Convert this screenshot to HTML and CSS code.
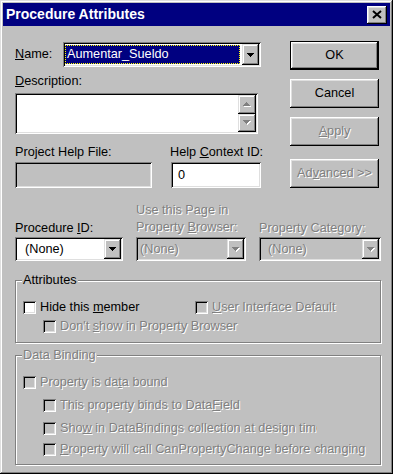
FILE: index.html
```html
<!DOCTYPE html>
<html>
<head lang="en">
    <meta charset="UTF-8">
    <title>Procedure Attributes</title>
    <link rel="stylesheet" href="styles.css">
</head>
<body>
<div class="window">
    <div class="titlebar">
        <span class="title">Procedure Attributes</span>
        <span class="close">
            <svg width="10" height="9" viewBox="0 0 10 9"><path d="M1 1l8 7M9 1L1 8" stroke="#000" stroke-width="2"/></svg>
        </span>
    </div>

    <div class="client">
        <div class="top">
            <div class="main">
                <div class="name-row">
                    <span class="lbl"><u>N</u>ame:</span>
                    <div class="combo combo-name">
                        <span class="combo-value selected">Aumentar_Sueldo</span>
                        <span class="drop">
                            <svg width="7" height="4" viewBox="0 0 7 4" shape-rendering="crispEdges"><path d="M0 0H7V1H6V2H5V3H4V4H3V3H2V2H1V1H0Z"/></svg>
                        </span>
                    </div>
                </div>

                <div class="lbl desc-lbl"><u>D</u>escription:</div>
                <div class="memo">
                    <div class="vscroll">
                        <span class="sbtn">
                            <svg width="8" height="5" viewBox="0 0 8 5" shape-rendering="crispEdges"><path fill="#fff" transform="translate(1 1)" d="M3 0H4V1H5V2H6V3H7V4H0V3H1V2H2V1H3Z"/><path fill="#808080" d="M3 0H4V1H5V2H6V3H7V4H0V3H1V2H2V1H3Z"/></svg>
                        </span>
                        <span class="sbtn">
                            <svg width="8" height="5" viewBox="0 0 8 5" shape-rendering="crispEdges"><path fill="#fff" transform="translate(1 1)" d="M0 0H7V1H6V2H5V3H4V4H3V3H2V2H1V1H0Z"/><path fill="#808080" d="M0 0H7V1H6V2H5V3H4V4H3V3H2V2H1V1H0Z"/></svg>
                        </span>
                    </div>
                </div>

                <div class="help-row">
                    <div class="field help-file">
                        <span class="lbl">Project Help File:</span>
                        <div class="edit edit-off"></div>
                    </div>
                    <div class="field help-ctx">
                        <span class="lbl">Help <u>C</u>ontext ID:</span>
                        <div class="edit">0</div>
                    </div>
                </div>
            </div>

            <div class="buttons">
                <span class="btn btn-default"><span>OK</span></span>
                <span class="btn"><span>Cancel</span></span>
                <span class="btn off"><span><u>A</u>pply</span></span>
                <span class="btn btn-adv off"><span>Ad<u>v</u>anced &gt;&gt;</span></span>
            </div>
        </div>

        <div class="proc-row">
            <div class="proc-col">
                <span class="lbl">Procedure <u>I</u>D:</span>
                <div class="combo combo-proc">
                    <span class="combo-value pad-1">(None)</span>
                    <span class="drop">
                        <svg width="7" height="4" viewBox="0 0 7 4" shape-rendering="crispEdges"><path d="M0 0H7V1H6V2H5V3H4V4H3V3H2V2H1V1H0Z"/></svg>
                    </span>
                </div>
            </div>
            <div class="proc-col">
                <span class="lbl lbl-2line off">Use this Page in<br>Property <u>B</u>rowser:</span>
                <div class="combo combo-proc combo-off">
                    <span class="combo-value pad-2 off">(None)</span>
                    <span class="drop">
                        <svg width="8" height="5" viewBox="0 0 8 5" shape-rendering="crispEdges"><path fill="#fff" transform="translate(1 1)" d="M0 0H7V1H6V2H5V3H4V4H3V3H2V2H1V1H0Z"/><path fill="#808080" d="M0 0H7V1H6V2H5V3H4V4H3V3H2V2H1V1H0Z"/></svg>
                    </span>
                </div>
            </div>
            <div class="proc-col">
                <span class="lbl off">Property Cate<u>g</u>ory:</span>
                <div class="combo combo-proc combo-off">
                    <span class="combo-value pad-3 off">(None)</span>
                    <span class="drop">
                        <svg width="8" height="5" viewBox="0 0 8 5" shape-rendering="crispEdges"><path fill="#fff" transform="translate(1 1)" d="M0 0H7V1H6V2H5V3H4V4H3V3H2V2H1V1H0Z"/><path fill="#808080" d="M0 0H7V1H6V2H5V3H4V4H3V3H2V2H1V1H0Z"/></svg>
                    </span>
                </div>
            </div>
        </div>

        <div class="group group-attr">
            <span class="group-title">Attributes</span>
            <div class="checks checks-attr">
                <div class="check-pair">
                    <label class="check"><i class="box"></i><span>Hide this <u>m</u>ember</span></label>
                    <label class="check off"><i class="box box-off"></i><span><u>U</u>ser Interface Default</span></label>
                </div>
                <label class="check sub off"><i class="box box-off"></i><span>Don't <u>s</u>how in Property Browser</span></label>
            </div>
        </div>

        <div class="group group-data">
            <span class="group-title off">Data Binding</span>
            <div class="checks">
                <label class="check off"><i class="box box-off"></i><span>Property is da<u>t</u>a bound</span></label>
                <label class="check sub off"><i class="box box-off"></i><span>This property binds to Data<u>F</u>ield</span></label>
                <label class="check sub off"><i class="box box-off"></i><span class="clip">Sho<u>w</u> in DataBindings collection at design time</span></label>
                <label class="check sub tight off"><i class="box box-off"></i><span><u>P</u>roperty will call CanPropertyChange before changing</span></label>
            </div>
        </div>
    </div>
</div>
</body>
</html>
```

FILE: styles.css
```css
*{
    margin: 0;
    padding: 0;
    box-sizing: border-box;
}
html,body{
    font-family: "Liberation Sans", Arial, sans-serif;
    font-size: 12.7px;
    line-height: 15px;
    color: #000;
    background: #c0c0c0;
}
u{
    text-underline-offset: 1px;
}
.window{
    width: 393px;
    height: 474px;
    padding: 3px;
    background: #c0c0c0;
    box-shadow: inset -1px -1px #000, inset 1px 1px #dfdfdf, inset -2px -2px #808080, inset 2px 2px #fff;
}
.titlebar{
    height: 23px;
    display: flex;
    align-items: center;
    justify-content: space-between;
    padding: 0 3px 0 3px;
    background: #000080;
    color: #fff;
}
.title{
    font-size: 14px;
    font-weight: bold;
}
.close{
    width: 20px;
    height: 18px;
    display: flex;
    align-items: center;
    justify-content: center;
    background: #c0c0c0;
    box-shadow: inset -1px -1px #000, inset 1px 1px #fff, inset -2px -2px #808080, inset 2px 2px #dfdfdf;
}

/* disabled text: grey with a white emboss */
.off{
    color: #808080;
    text-shadow: 1px 1px 0 #fff;
}
.lbl{
    white-space: nowrap;
}

.client{
    padding: 15px 0 0 12px;
}
.top{
    display: flex;
    gap: 29px;
}
.main{
    width: 246px;
}
.name-row{
    display: flex;
    align-items: center;
    justify-content: space-between;
    margin-top: 1px;
}
.desc-lbl{
    margin-top: 7px;
}

/* sunken fields */
.combo, .memo, .edit, .box{
    background: #fff;
    box-shadow: inset 1px 1px #808080, inset -1px -1px #fff, inset 2px 2px #000, inset -2px -2px #dfdfdf;
}
.combo{
    display: flex;
    height: 24px;
    padding: 2px;
}
.combo-name{
    width: 198px;
    height: 25px;
}
.combo-off, .edit-off, .box-off{
    background: #c0c0c0;
}
.combo-value{
    flex: 1;
    display: flex;
    align-items: center;
    white-space: nowrap;
}
.combo-value.selected{
    margin: 1px 2px 1px 0;
    padding-left: 2px;
    background: #000080;
    color: #fff;
    outline: 1px dotted #ffff00;
    outline-offset: -1px;
}
.pad-1{ padding-left: 8px; }
.pad-2{ padding-left: 2px; }
.pad-3{ padding-left: 7px; }
.drop, .sbtn{
    width: 17px;
    display: flex;
    align-items: center;
    justify-content: center;
    background: #c0c0c0;
    box-shadow: inset -1px -1px #000, inset 1px 1px #dfdfdf, inset -2px -2px #808080, inset 2px 2px #fff;
}

.memo{
    height: 41px;
    width: 243px;
    margin-top: 4px;
    padding: 2px;
    display: flex;
    justify-content: flex-end;
}
.vscroll{
    width: 18px;
    display: flex;
    flex-direction: column;
}
.sbtn{
    width: 18px;
    flex: 1;
}

.help-row{
    display: flex;
    justify-content: space-between;
    margin-top: 11px;
}
.field{
    display: flex;
    flex-direction: column;
    gap: 2px;
}
.help-file{
    width: 137px;
}
.help-ctx{
    width: 90px;
}
.help-ctx .lbl{
    margin-left: -1px;
}
.edit{
    height: 26px;
    padding: 0 7px;
    display: flex;
    align-items: center;
}

.buttons{
    width: 89px;
    display: flex;
    flex-direction: column;
    gap: 9px;
}
.btn{
    height: 29px;
    display: flex;
    align-items: center;
    justify-content: center;
    white-space: nowrap;
    background: #c0c0c0;
    box-shadow: inset -1px -1px #000, inset 1px 1px #fff, inset -2px -2px #808080, inset 2px 2px #dfdfdf;
}
.btn-default{
    box-shadow: inset 0 0 0 1px #000, inset -2px -2px #000, inset 2px 2px #fff, inset -3px -3px #808080, inset 3px 3px #dfdfdf;
}
.btn-adv{
    margin-top: 4px;
}

.proc-row{
    display: grid;
    grid-template-columns: 108px 110px 122px;
    column-gap: 13px;
    align-items: end;
    margin-top: 14px;
}
.proc-col{
    display: flex;
    flex-direction: column;
    gap: 1px;
}
.lbl-2line{
    line-height: 17px;
}

/* group boxes */
.group{
    position: relative;
    width: 366px;
    padding: 19px 7px 7px;
    border: 1px solid #808080;
    box-shadow: inset 1px 1px #fff, 1px 1px #fff;
}
.group-attr{
    margin-top: 19px;
    padding-bottom: 8px;
}
.group-data{
    margin-top: 12px;
}
.group-title{
    position: absolute;
    top: -8px;
    left: 6px;
    padding: 0 1px;
    background: #c0c0c0;
}
.checks{
    display: flex;
    flex-direction: column;
    gap: 8px;
}
.checks-attr{
    gap: 4px;
}
.check-pair{
    display: grid;
    grid-template-columns: 172px auto;
}
.check{
    height: 15px;
    display: flex;
    align-items: center;
    gap: 4px;
    white-space: nowrap;
}
.check.sub{
    margin-left: 20px;
}
.check.tight{
    margin-top: -2px;
}
.box{
    width: 13px;
    height: 13px;
    flex: none;
}
/* the dialog itself cuts this label short */
.clip{
    display: block;
    width: 257px;
    overflow: hidden;
}
```
